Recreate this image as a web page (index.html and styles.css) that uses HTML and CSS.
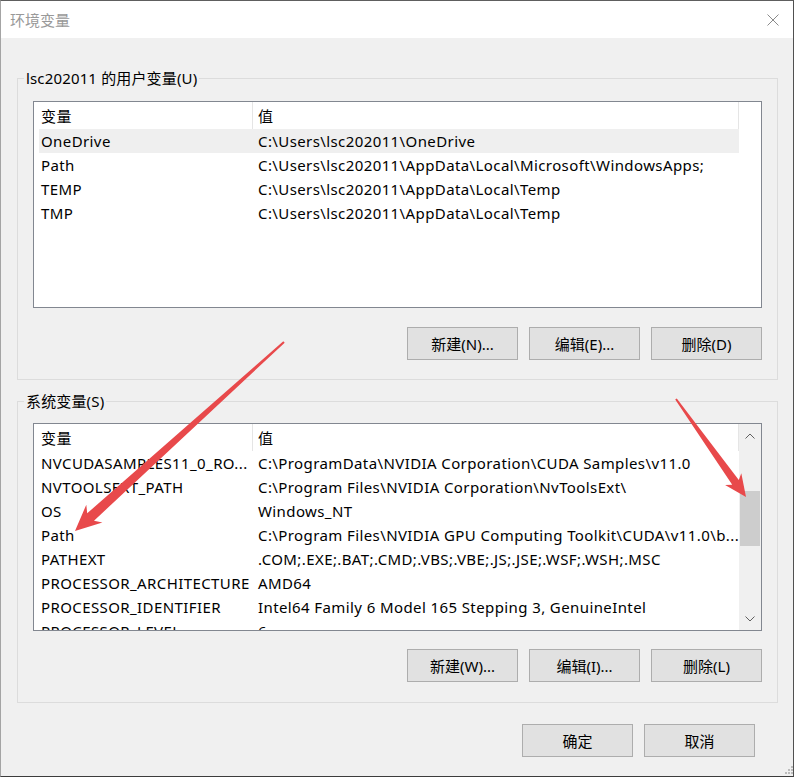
FILE: index.html
```html
<!DOCTYPE html>
<html lang="zh-CN">

<head>
    <meta charset="UTF-8">
    <title>环境变量</title>
    <link rel="stylesheet" href="styles.css">
</head>

<body>
    <div class="window">
        <div class="titlebar">
            <span class="title">环境变量</span>
            <svg class="close" width="12" height="12" viewBox="0 0 12 12">
                <path d="M0.5 0.5 L11.5 11.5 M11.5 0.5 L0.5 11.5" stroke="#8a8a8a" stroke-width="1" fill="none" />
            </svg>
        </div>

        <div class="content">
            <fieldset class="group group-user">
                <legend>lsc202011 的用户变量(U)</legend>
                <div class="list list-user">
                    <div class="list-main">
                        <div class="list-head">
                            <div class="col-name">变量</div>
                            <div class="col-value">值</div>
                        </div>
                        <div class="row selected">
                            <div class="col-name">OneDrive</div>
                            <div class="col-value">C:\Users\lsc202011\OneDrive</div>
                        </div>
                        <div class="row">
                            <div class="col-name">Path</div>
                            <div class="col-value">C:\Users\lsc202011\AppData\Local\Microsoft\WindowsApps;</div>
                        </div>
                        <div class="row">
                            <div class="col-name">TEMP</div>
                            <div class="col-value">C:\Users\lsc202011\AppData\Local\Temp</div>
                        </div>
                        <div class="row">
                            <div class="col-name">TMP</div>
                            <div class="col-value">C:\Users\lsc202011\AppData\Local\Temp</div>
                        </div>
                    </div>
                    <div class="list-spare"></div>
                </div>
                <div class="buttons">
                    <button>新建(N)...</button>
                    <button>编辑(E)...</button>
                    <button>删除(D)</button>
                </div>
            </fieldset>

            <fieldset class="group group-system">
                <legend>系统变量(S)</legend>
                <div class="list list-system">
                    <div class="list-main">
                        <div class="list-head">
                            <div class="col-name">变量</div>
                            <div class="col-value">值</div>
                        </div>
                        <div class="row">
                            <div class="col-name">NVCUDASAMPLES11_0_RO...</div>
                            <div class="col-value">C:\ProgramData\NVIDIA Corporation\CUDA Samples\v11.0</div>
                        </div>
                        <div class="row">
                            <div class="col-name">NVTOOLSEXT_PATH</div>
                            <div class="col-value">C:\Program Files\NVIDIA Corporation\NvToolsExt\</div>
                        </div>
                        <div class="row">
                            <div class="col-name">OS</div>
                            <div class="col-value">Windows_NT</div>
                        </div>
                        <div class="row">
                            <div class="col-name">Path</div>
                            <div class="col-value">C:\Program Files\NVIDIA GPU Computing Toolkit\CUDA\v11.0\b...</div>
                        </div>
                        <div class="row">
                            <div class="col-name">PATHEXT</div>
                            <div class="col-value">.COM;.EXE;.BAT;.CMD;.VBS;.VBE;.JS;.JSE;.WSF;.WSH;.MSC</div>
                        </div>
                        <div class="row">
                            <div class="col-name">PROCESSOR_ARCHITECTURE</div>
                            <div class="col-value">AMD64</div>
                        </div>
                        <div class="row">
                            <div class="col-name">PROCESSOR_IDENTIFIER</div>
                            <div class="col-value">Intel64 Family 6 Model 165 Stepping 3, GenuineIntel</div>
                        </div>
                        <div class="row">
                            <div class="col-name">PROCESSOR_LEVEL</div>
                            <div class="col-value">6</div>
                        </div>
                    </div>
                    <div class="scrollbar">
                        <div class="scroll-btn">
                            <svg width="10" height="6" viewBox="0 0 10 6">
                                <polyline points="0.5,5.5 5,1 9.5,5.5" stroke="#606060" fill="none" />
                            </svg>
                        </div>
                        <div class="scroll-track">
                            <div class="scroll-thumb"></div>
                        </div>
                        <div class="scroll-btn">
                            <svg width="10" height="6" viewBox="0 0 10 6">
                                <polyline points="0.5,0.5 5,5 9.5,0.5" stroke="#606060" fill="none" />
                            </svg>
                        </div>
                    </div>
                </div>
                <div class="buttons">
                    <button>新建(W)...</button>
                    <button>编辑(I)...</button>
                    <button>删除(L)</button>
                </div>
            </fieldset>

            <div class="dialog-buttons">
                <button>确定</button>
                <button>取消</button>
            </div>
        </div>

        <!-- size grip in the bottom right corner -->
        <svg class="grip" width="10" height="10" viewBox="0 0 10 10">
            <rect x="8" y="0" width="2" height="2" />
            <rect x="5" y="3" width="2" height="2" />
            <rect x="8" y="3" width="2" height="2" />
            <rect x="2" y="6" width="2" height="2" />
            <rect x="5" y="6" width="2" height="2" />
            <rect x="8" y="6" width="2" height="2" />
        </svg>

        <!-- red pointers drawn over the dialog -->
        <svg class="marks" width="794" height="777" viewBox="0 0 794 777">
            <polygon points="284.7,342.7 94,520.7 102.4,522.5 75,531 86.3,504.7 87.2,513.3 283.3,341.3" />
            <polygon points="675.2,399.6 732.2,484.7 725.1,484.9 746,497 741.3,473.3 738.8,480.1 676.8,398.4" />
        </svg>
    </div>
</body>

</html>
```

FILE: styles.css
```css
body {
    margin: 0;
    background-color: #f0f0f0;
    font-family: "Noto Sans", "Noto Sans CJK SC", sans-serif;
    font-size: 15px;
    color: #000;
}

.window {
    position: relative;
    width: 794px;
    height: 777px;
    box-sizing: border-box;
    background-color: #f0f0f0;
    border-top: 1px solid #5e5e5e;
    border-left: 1px solid #a4a4a4;
    border-right: 1px solid #505050;
    border-bottom: 1px solid #3c3c3c;
}

.titlebar {
    display: flex;
    justify-content: space-between;
    align-items: center;
    height: 37px;
    padding: 0 14px 0 9px;
    background-color: #fff;
}

.title {
    color: #999;
    line-height: 20px;
}

.content {
    padding: 30px 15px 0 16px;
}

.group {
    margin: 0;
    min-width: 0;
    border: 1px solid #dcdcdc;
    padding: 13px 15px 19px 15px;
}

.group legend {
    margin-left: -9px;
    padding: 0 2px;
    line-height: 20px;
    letter-spacing: 0.15px;
}

.group-system {
    margin-top: 11px;
    padding-top: 12px;
    padding-bottom: 20px;
}

/* list view */
.list {
    display: flex;
    height: 207px;
    box-sizing: border-box;
    border: 1px solid #828790;
    background-color: #fff;
    overflow: hidden;
}

.list-system {
    height: 208px;
}

.list-main {
    width: 700px;
    margin-left: 5px;
    flex-shrink: 0;
}

.list-spare {
    flex: 1;
}

.list-head,
.row {
    display: flex;
    white-space: nowrap;
    letter-spacing: 0.4px;
}

.list-head {
    height: 27px;
    line-height: 29px;
}

.row {
    height: 24px;
    line-height: 24px;
}

.row.selected {
    background-color: #efefef;
}

.col-name {
    width: 214px;
    box-sizing: border-box;
    padding-left: 2px;
    overflow: hidden;
}

.col-value {
    flex: 1;
    padding-left: 5px;
    overflow: hidden;
}

.list-head .col-name,
.list-head .col-value {
    border-right: 1px solid #e5e5e5;
}

/* scroll bar of the system list */
.scrollbar {
    flex: 1;
    display: flex;
    flex-direction: column;
    background-color: #f0f0f0;
}

.scroll-btn {
    display: flex;
    justify-content: center;
    align-items: center;
    height: 23px;
}

.scroll-track {
    flex: 1;
}

.scroll-thumb {
    height: 55px;
    margin: 44px 1px 0 1px;
    background-color: #cdcdcd;
}

/* buttons */
.buttons {
    display: flex;
    justify-content: flex-end;
    gap: 11px;
    margin-top: 19px;
}

.group-system .buttons {
    margin-top: 18px;
}

button {
    width: 111px;
    height: 33px;
    padding: 0;
    font-family: inherit;
    font-size: 15px;
    color: #000;
    background-color: #e1e1e1;
    border: 1px solid #adadad;
}

.dialog-buttons {
    display: flex;
    justify-content: flex-end;
    gap: 11px;
    margin-top: 21px;
    padding-right: 23px;
}

.grip {
    position: absolute;
    right: 0;
    bottom: 0;
    fill: #bcbcbc;
}

.marks {
    position: absolute;
    top: -1px;
    left: -1px;
    fill: #e8494b;
    pointer-events: none;
}
```
